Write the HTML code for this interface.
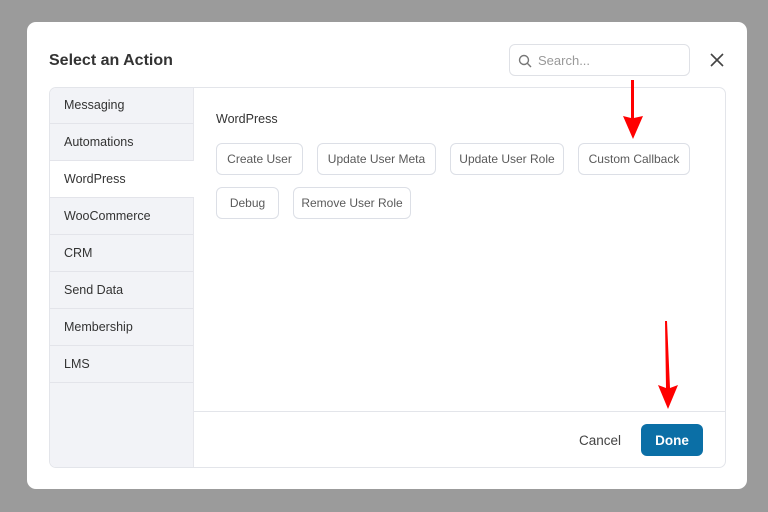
<!DOCTYPE html>
<html><head><style>
*{box-sizing:border-box;margin:0;padding:0}
body{width:768px;height:512px;background:#9b9b9b;font-family:"Liberation Sans",sans-serif;position:relative;overflow:hidden}
.modal{position:absolute;left:27px;top:22px;width:720px;height:467px;background:#fff;border-radius:9px}
.title{position:absolute;left:49px;top:52px;font-size:16px;font-weight:bold;color:#333}
.search{position:absolute;left:509px;top:44px;width:181px;height:32px;border:1px solid #dfe1e6;border-radius:6px}
.search span{position:absolute;left:28px;top:8px;font-size:13px;color:#999}
.panel{position:absolute;left:49px;top:87px;width:677px;height:381px;border:1px solid #e3e5ea;border-radius:7px;overflow:hidden}
.side{position:absolute;left:0;top:0;width:144px;height:100%;background:#f2f3f7;border-right:1px solid #e6e7ec}
.side div{height:37px;border-bottom:1px solid #e3e4ea;padding:11px 0 0 14px;font-size:12.5px;color:#333}
.side div:first-child{height:36px;padding-top:10px}
.side .act{background:#fff;margin-right:-1px}
.h{position:absolute;left:166px;top:24px;font-size:12.5px;color:#333}
.b{position:absolute;height:32px;border:1px solid #dcdfe6;border-radius:6px;font-size:12px;color:#5a5a5a;text-align:center;line-height:30px}
.foot{position:absolute;left:144px;top:323px;right:0;border-top:1px solid #e3e5ea}
.cancel{position:absolute;left:579px;top:433px;font-size:13.5px;color:#444}
.done{position:absolute;left:641px;top:424px;width:62px;height:32px;background:#0b6fa6;border-radius:6px;color:#fff;font-size:13.5px;font-weight:bold;text-align:center;line-height:33px}
</style></head><body>
<div class="modal"></div>
<div class="title">Select an Action</div>
<div class="search"><svg width="14" height="14" style="position:absolute;left:8px;top:9px" viewBox="0 0 14 14"><circle cx="6" cy="6" r="4.5" fill="none" stroke="#777" stroke-width="1.4"/><path d="M9.3 9.3 13 13" stroke="#777" stroke-width="1.4"/></svg><span>Search...</span></div>
<svg width="16" height="16" style="position:absolute;left:709px;top:52px" viewBox="0 0 16 16"><path d="M2 2 14 14M14 2 2 14" stroke="#444" stroke-width="1.6"/></svg>
<div class="panel">
<div class="side"><div>Messaging</div><div>Automations</div><div class="act">WordPress</div><div>WooCommerce</div><div>CRM</div><div>Send Data</div><div>Membership</div><div>LMS</div></div>
<div class="h">WordPress</div>
<div class="foot"></div>
</div>
<div class="b" style="left:216px;top:143px;width:87px">Create User</div>
<div class="b" style="left:317px;top:143px;width:119px">Update User Meta</div>
<div class="b" style="left:450px;top:143px;width:114px">Update User Role</div>
<div class="b" style="left:578px;top:143px;width:112px">Custom Callback</div>
<div class="b" style="left:216px;top:187px;width:63px">Debug</div>
<div class="b" style="left:293px;top:187px;width:118px">Remove User Role</div>
<div class="cancel">Cancel</div>
<div class="done">Done</div>
<svg width="768" height="512" style="position:absolute;left:0;top:0">
<path d="M631 80 L634 80 L634 118 L643 116 L633 139 L623 116 L631 118 Z" fill="#f00"/>
<path d="M665 321 L667 321 L670 388 L678 385 L668 409 L658 385 L666 388 Z" fill="#f00"/>
</svg>
</body></html>
